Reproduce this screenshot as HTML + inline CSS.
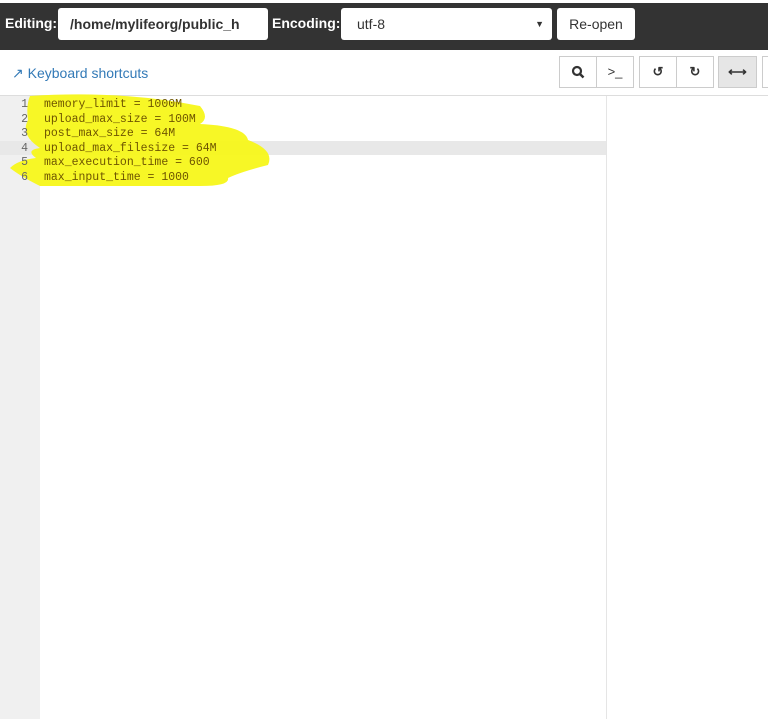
<!DOCTYPE html>
<html><head><style>
body{margin:0;width:768px;height:719px;background:#fff;position:relative;overflow:hidden;font-family:"Liberation Sans",sans-serif}
.top{position:absolute;left:0;top:3px;width:768px;height:47px;background:#333}
.lbl{position:absolute;top:15px;color:#fff;font-weight:bold;font-size:14px}
.inp{position:absolute;top:8px;height:32px;background:#fff;border-radius:3px;font-size:14px;line-height:32px;color:#333}
.btn{position:absolute;top:56px;height:32px;border:1px solid #ccc;background:#fff;box-sizing:border-box;text-align:center;line-height:30px;font-size:13px;color:#333;font-weight:bold}
.gut{position:absolute;left:0;top:96px;width:40px;height:623px;background:#f0f0f0}
.code{position:absolute;left:0;top:98px;font-family:"Liberation Mono",monospace;font-size:11.5px;color:#6e5500}
.ln{position:absolute;left:0;width:28px;text-align:right;color:#666}
.tx{position:absolute;left:44px;white-space:pre}
</style></head><body>
<div class="top"></div>
<div class="lbl" style="left:5px">Editing:</div>
<div class="inp" style="left:58px;width:210px;padding-left:12px;box-sizing:border-box;font-weight:bold">/home/mylifeorg/public_h</div>
<div class="lbl" style="left:272px">Encoding:</div>
<div class="inp" style="left:341px;width:211px;padding-left:16px;box-sizing:border-box">utf-8<span style="position:absolute;right:8px;font-size:9px">▼</span></div>
<div class="inp" style="left:557px;width:78px;text-align:center">Re-open</div>
<div style="position:absolute;left:12px;top:65px;font-size:14px;color:#337ab7">&#x2197;&#xFE0E; Keyboard shortcuts</div>
<div class="btn" style="left:559px;width:38px"><svg width="14" height="14" viewBox="0 0 14 14" style="margin-top:8px"><circle cx="6" cy="6" r="4" fill="none" stroke="#333" stroke-width="2.2"/><path d="M9 9 L12.5 12.5" stroke="#333" stroke-width="2.5"/></svg></div>
<div class="btn" style="left:596px;width:38px;font-weight:normal">&gt;_</div>
<div class="btn" style="left:639px;width:38px">↺</div>
<div class="btn" style="left:676px;width:38px">↻</div>
<div class="btn" style="left:718px;width:39px;background:#e6e6e6">⟷</div>
<div class="btn" style="left:762px;width:20px"></div>
<div style="position:absolute;left:0;top:95px;width:768px;height:1px;background:#ddd"></div>
<div class="gut"></div>
<div style="position:absolute;left:606px;top:96px;width:1px;height:623px;background:#e5e5e5"></div>
<div style="position:absolute;left:0;top:141px;width:606px;height:14px;background:#e8e8e8"></div>
<svg style="position:absolute;left:0;top:0" width="768" height="719"><path d="M30 96 Q120 90 200 106 Q210 118 200 124 Q245 126 248 140 Q275 150 268 165 Q240 172 228 178 Q230 186 200 186 L40 186 Q20 176 10 168 Q18 160 36 158 Q25 150 40 148 Q20 135 28 120 Q26 105 30 96Z" fill="#f7f71a" opacity="0.95"/></svg>
<div class="code">
<div class="ln" style="top:0">1</div><div class="tx" style="top:0">memory_limit = 1000M</div>
<div class="ln" style="top:14.6px">2</div><div class="tx" style="top:14.6px">upload_max_size = 100M</div>
<div class="ln" style="top:29.2px">3</div><div class="tx" style="top:29.2px">post_max_size = 64M</div>
<div class="ln" style="top:43.8px">4</div><div class="tx" style="top:43.8px">upload_max_filesize = 64M</div>
<div class="ln" style="top:58.4px">5</div><div class="tx" style="top:58.4px">max_execution_time = 600</div>
<div class="ln" style="top:73px">6</div><div class="tx" style="top:73px">max_input_time = 1000</div>
</div>
</body></html>
